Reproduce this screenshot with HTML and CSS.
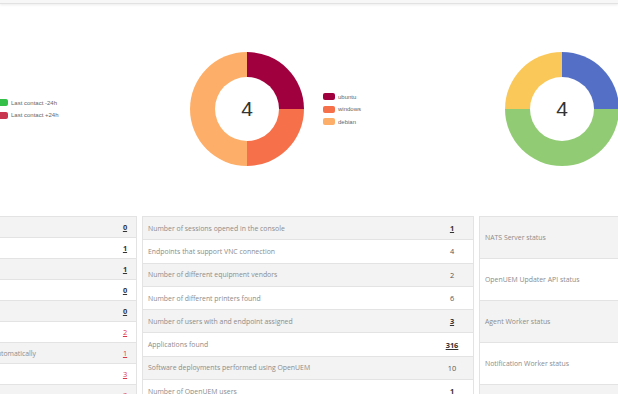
FILE: index.html
```html
<!DOCTYPE html>
<html lang="en">
<head>
<meta charset="utf-8">
<title>Dashboard</title>
<link rel="stylesheet" href="styles.css">
</head>
<body>
<div class="topbar"></div>
<div class="page">
  <section class="charts">
    <div class="chart-card chart-left">
      <div class="donut donut-agents"><span class="donut-hole">4</span></div>
      <ul class="legend">
        <li><span class="swatch sw-green"></span>Last contact -24h</li>
        <li><span class="swatch sw-red"></span>Last contact +24h</li>
      </ul>
    </div>
    <div class="chart-card chart-mid">
      <div class="donut donut-os"><span class="donut-hole">4</span></div>
      <ul class="legend">
        <li><span class="swatch sw-ubuntu"></span>ubuntu</li>
        <li><span class="swatch sw-windows"></span>windows</li>
        <li><span class="swatch sw-debian"></span>debian</li>
      </ul>
    </div>
    <div class="chart-card chart-right">
      <div class="donut donut-versions"><span class="donut-hole">4</span></div>
    </div>
  </section>

  <section class="tables">
    <table class="stats stats-left">
      <tr><td class="label">Endpoints with pending updates</td><td class="val"><a class="link">0</a></td></tr>
      <tr><td class="label">Endpoints with antivirus enabled</td><td class="val"><a class="link">1</a></td></tr>
      <tr><td class="label">Antivirus up to date</td><td class="val"><a class="link">1</a></td></tr>
      <tr><td class="label">Endpoints with disk alerts</td><td class="val"><a class="link">0</a></td></tr>
      <tr><td class="label">Endpoints with disabled agents</td><td class="val"><a class="link">0</a></td></tr>
      <tr><td class="label">Endpoints waiting for admission</td><td class="val"><a class="link red">2</a></td></tr>
      <tr><td class="label">Number of endpoints where updates are never installed automatically</td><td class="val"><a class="link red">1</a></td></tr>
      <tr><td class="label">Endpoints without antivirus</td><td class="val"><a class="link red">3</a></td></tr>
      <tr><td class="label">Outdated antivirus</td><td class="val"><a class="link red">3</a></td></tr>
    </table>

    <table class="stats stats-mid">
      <tr><td class="label">Number of sessions opened in the console</td><td class="val"><a class="link">1</a></td></tr>
      <tr><td class="label">Endpoints that support VNC connection</td><td class="val">4</td></tr>
      <tr><td class="label">Number of different equipment vendors</td><td class="val">2</td></tr>
      <tr><td class="label">Number of different printers found</td><td class="val">6</td></tr>
      <tr><td class="label">Number of users with and endpoint assigned</td><td class="val"><a class="link">3</a></td></tr>
      <tr><td class="label">Applications found</td><td class="val"><a class="link">316</a></td></tr>
      <tr><td class="label">Software deployments performed using OpenUEM</td><td class="val">10</td></tr>
      <tr><td class="label">Number of OpenUEM users</td><td class="val"><a class="link">1</a></td></tr>
    </table>

    <table class="stats stats-right">
      <tr><td class="label">NATS Server status</td><td class="val"></td></tr>
      <tr><td class="label">OpenUEM Updater API status</td><td class="val"></td></tr>
      <tr><td class="label">Agent Worker status</td><td class="val"></td></tr>
      <tr><td class="label">Notification Worker status</td><td class="val"></td></tr>
      <tr><td class="label">Cert Manager Worker status</td><td class="val"></td></tr>
    </table>
  </section>
</div>
</body>
</html>
```

FILE: styles.css
```css
html, body {
  margin: 0;
  padding: 0;
  background: #fff;
  overflow: hidden;
  width: 618px;
  height: 394px;
}

.topbar {
  height: 3px;
  background: #f7f7f7;
  border-bottom: 1px solid #e2e2e2;
  box-shadow: 0 1px 3px rgba(0,0,0,0.08);
}

.page {
  margin-left: -195px;
  width: 1007px;
}

.charts {
  display: grid;
  grid-template-columns: 332px 332px 332px;
  column-gap: 5px;
  padding-top: 48px;
  height: 164px;
}

.chart-card {
  display: flex;
  align-items: center;
  height: 114px;
}

.chart-left { padding-left: 60px; gap: 17px; }
.chart-mid { padding-left: 48px; gap: 19px; }
.chart-right { padding-left: 26px; }

.donut {
  width: 114px;
  height: 114px;
  border-radius: 50%;
  display: flex;
  align-items: center;
  justify-content: center;
  flex: none;
}

.donut-agents { background: conic-gradient(#35c04a 0 100%); }
.donut-os {
  background: conic-gradient(#a1003e 0 25%, #f6704a 25% 50%, #fdae68 50% 100%);
}
.donut-versions {
  background: conic-gradient(#5470c6 0 25%, #91cc75 25% 75%, #fac858 75% 100%);
}

.donut-hole {
  width: 64px;
  height: 64px;
  border-radius: 50%;
  background: #fff;
  display: flex;
  align-items: center;
  justify-content: center;
  font-family: "Liberation Sans", Arial, sans-serif;
  font-size: 21px;
  color: #333;
}

.legend {
  list-style: none;
  margin: 0;
  padding: 0;
  font-family: "Liberation Sans", Arial, sans-serif;
  font-size: 6px;
  color: #666;
}

.legend li {
  display: flex;
  align-items: center;
  height: 12.5px;
}

.swatch {
  width: 12px;
  height: 7px;
  border-radius: 2px;
  margin-right: 3px;
  flex: none;
}

.sw-green { background: #35c04a; }
.sw-red { background: #c9364f; }
.sw-ubuntu { background: #a1003e; }
.sw-windows { background: #f6704a; }
.sw-debian { background: #fdae68; }

.tables {
  display: grid;
  grid-template-columns: 332px 332px 332px;
  column-gap: 5px;
  align-items: start;
}

.stats {
  border-collapse: collapse;
  width: 100%;
  font-family: "Open Sans", "Noto Sans", sans-serif;
  font-size: 6.9px;
  color: #8c8c8c;
  border: 1px solid #e3e3e3;
}

.stats td {
  border-bottom: 1px solid #e3e3e3;
  padding: 0 5px;
  white-space: nowrap;
}

.stats tr:nth-child(odd) td { background: #f3f3f3; }
.stats tr:nth-child(even) td { background: #fff; }

.stats-left tr { height: 21px; }
.stats-mid tr { height: 23.3px; }
.stats-right tr { height: 42px; }

.stats .val {
  text-align: center;
  color: #555;
  font-size: 7.4px;
}

.stats-left .val { width: 12px; }
.stats-mid .val { width: 32px; }

.link {
  color: #333;
  font-weight: 700;
  text-decoration: underline;
}

.link.red { color: #dc3545; font-weight: 400; }
```
